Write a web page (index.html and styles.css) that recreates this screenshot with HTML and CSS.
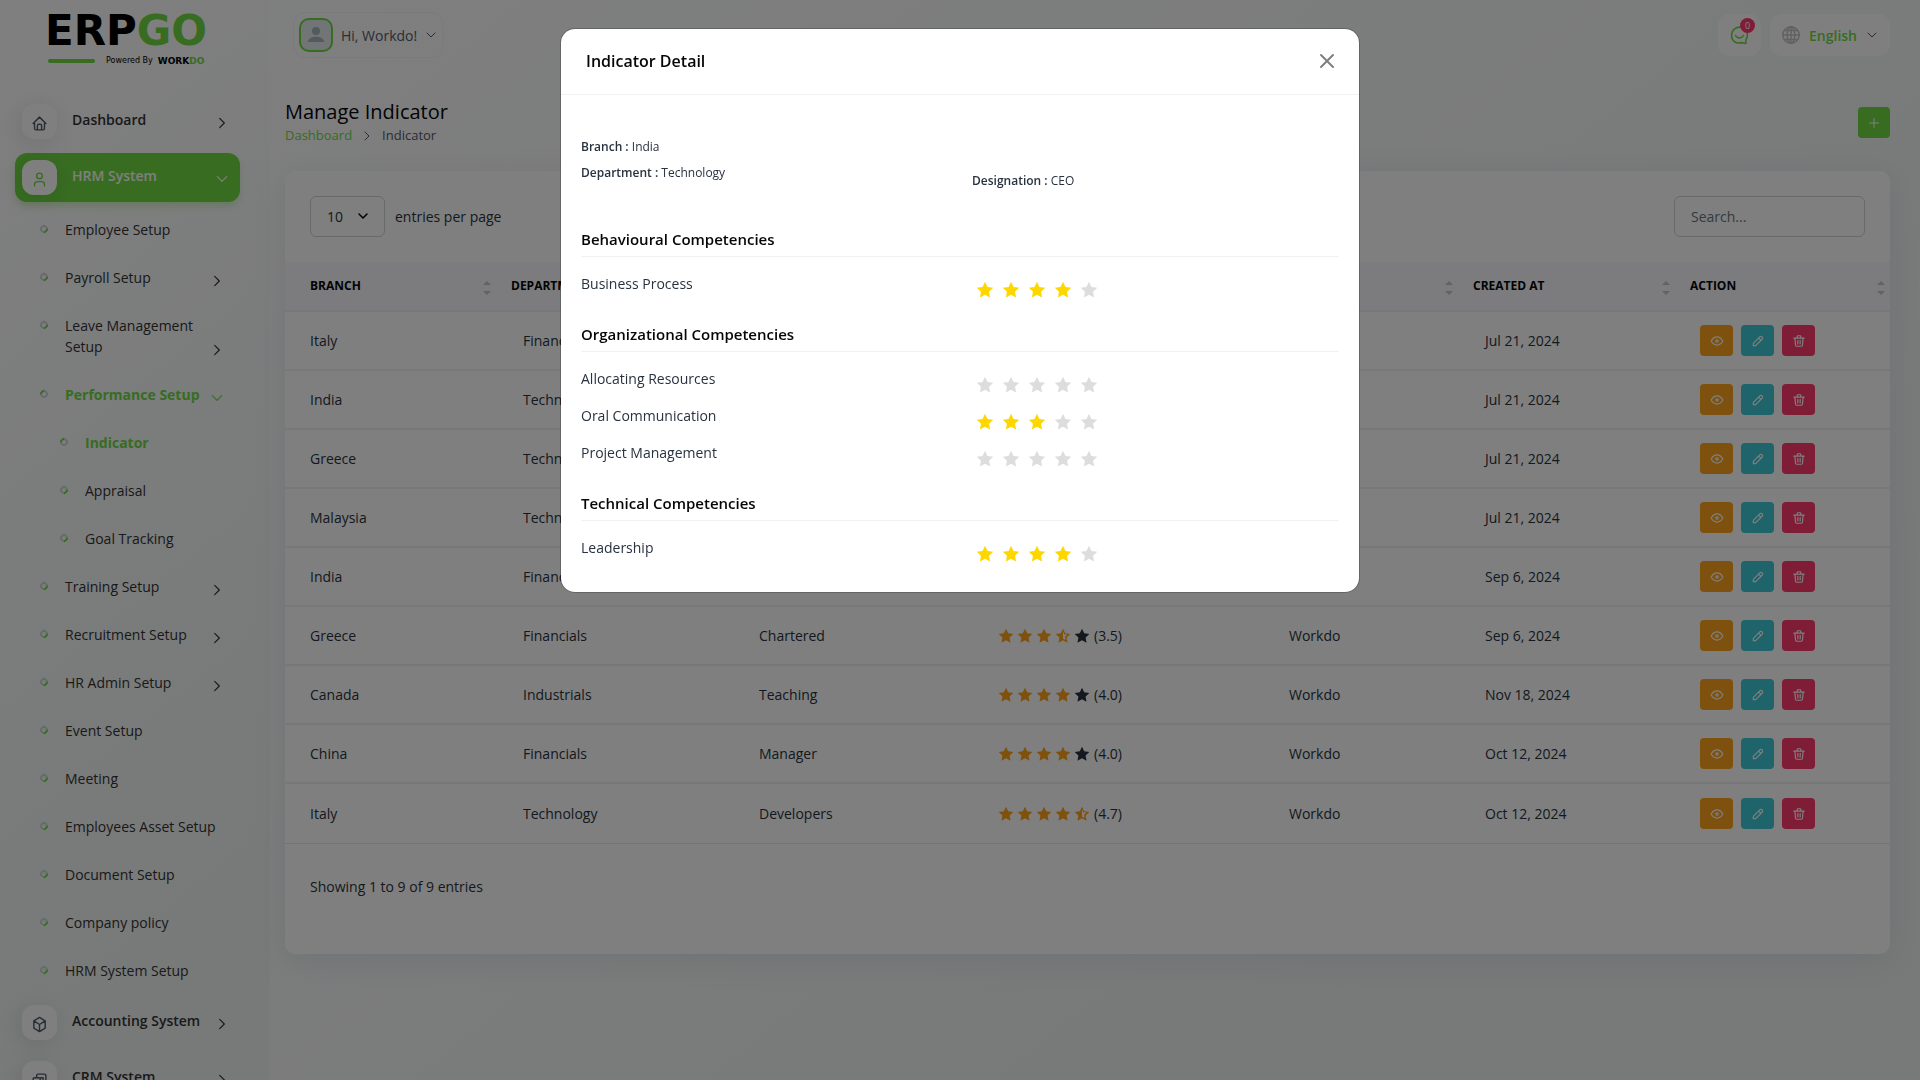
FILE: index.html
```html
<!DOCTYPE html>
<html lang="en">
<head>
    <meta charset="UTF-8">
    <meta name="viewport" content="width=device-width, initial-scale=1.0">
    <title>Manage Indicator</title>
    <link rel="stylesheet" href="styles.css">
</head>
<body>
    <!-- icon sprite -->
    <svg class="sprite" aria-hidden="true">
        <symbol id="chevron-right" viewBox="0 0 24 24"><path d="M8 4l8 8-8 8"/></symbol>
        <symbol id="chevron-down" viewBox="0 0 24 24"><path d="M4 8l8 8 8-8"/></symbol>
        <symbol id="home" viewBox="0 0 24 24"><path d="M5 12H3l9-9 9 9h-2M5 12v7a2 2 0 0 0 2 2h10a2 2 0 0 0 2-2v-7M9 21v-6a2 2 0 0 1 2-2h2a2 2 0 0 1 2 2v6"/></symbol>
        <symbol id="user" viewBox="0 0 24 24"><circle cx="12" cy="7" r="4"/><path d="M5 21v-2a4 4 0 0 1 4-4h6a4 4 0 0 1 4 4v2"/></symbol>
        <symbol id="box" viewBox="0 0 24 24"><path d="M12 2l8 5v10l-8 5-8-5V7zM12 12l8-5M12 12v10M12 12L4 7"/></symbol>
        <symbol id="layers" viewBox="0 0 24 24"><path d="M7 16v3a2 2 0 0 0 2 2h9a3 3 0 0 0 3-3V5a2 2 0 0 0-2-2h-9a2 2 0 0 0-2 2v3M3 10a2 2 0 0 1 2-2h6a2 2 0 0 1 2 2v9a2 2 0 0 1-2 2H5a2 2 0 0 1-2-2zM14 8h3v3"/></symbol>
        <symbol id="eye" viewBox="0 0 24 24"><circle cx="12" cy="12" r="2"/><path d="M22 12c-2.700 4.700-6 7-10 7s-7.300-2.300-10-7c2.700-4.700 6-7 10-7s7.300 2.300 10 7"/></symbol>
        <symbol id="pencil" viewBox="0 0 24 24"><path d="M4 20h4L19 9a2.800 2.800 0 0 0-4-4L4 16zM13 7l4 4"/></symbol>
        <symbol id="trash" viewBox="0 0 24 24"><path d="M3 7h18M10 11v6M14 11v6M5 7l1 12a2 2 0 0 0 2 2h8a2 2 0 0 0 2-2l1-12M9 7V4a1 1 0 0 1 1-1h4a1 1 0 0 1 1 1v3"/></symbol>
        <symbol id="plus" viewBox="0 0 24 24"><path d="M12 3v18M3 12h18"/></symbol>
        <symbol id="chat" viewBox="0 0 24 24"><path d="M20 17.500V22l-6-1c-6 2-12-2-12-9a10 10 0 1 1 18 5.500zM7 12c2 4 8 4 10 0"/></symbol>
        <symbol id="globe" viewBox="0 0 24 24"><circle cx="12" cy="12" r="11"/><ellipse cx="12" cy="12" rx="5" ry="11"/><path d="M12 1v22M1 12h22M3 6h18M3 18h18"/></symbol>
        <symbol id="star" viewBox="0 0 24 24"><path d="M12 1l3.300 7 7.700 1-5.600 5.300L18.800 22 12 18.300 5.200 22l1.400-7.700L1 9l7.700-1z"/></symbol>
        <symbol id="star-half" viewBox="0 0 24 24"><path fill-rule="evenodd" d="M12 1l3.300 7 7.700 1-5.600 5.300L18.800 22 12 18.300 5.200 22l1.400-7.700L1 9l7.700-1zM12 5v11l4 2-1-4.800 3.700-3.300-4.800-.6z"/></symbol>
        <symbol id="close" viewBox="0 0 16 16"><path d="M2 2l12 12M14 2L2 14"/></symbol>
        <symbol id="sort" viewBox="0 0 8 16"><path d="M0 5l4-4 4 4zM0 11l4 4 4-4z"/></symbol>
    </svg>

    <div class="app">
        <nav class="sidebar">
            <a href="#" class="logo">
                <span class="logo-name">ERP<span class="logo-green">GO</span></span>
                <span class="logo-tagline">
                    <span class="logo-bar"></span>
                    <span>Powered By</span>
                    <strong>WORK<span class="logo-green">DO</span></strong>
                </span>
            </a>

            <ul class="menu">
                <li>
                    <a href="#" class="menu-link">
                        <span class="menu-icon"><svg class="icon"><use href="#home"/></svg></span>
                        <span class="menu-text">Dashboard</span>
                        <svg class="icon arrow"><use href="#chevron-right"/></svg>
                    </a>
                </li>
                <li>
                    <a href="#" class="menu-link active">
                        <span class="menu-icon"><svg class="icon"><use href="#user"/></svg></span>
                        <span class="menu-text">HRM System</span>
                        <svg class="icon arrow"><use href="#chevron-down"/></svg>
                    </a>
                    <ul class="submenu">
                        <li><a href="#">Employee Setup</a></li>
                        <li><a href="#">Payroll Setup <svg class="icon arrow"><use href="#chevron-right"/></svg></a></li>
                        <li><a href="#"><span>Leave Management Setup</span> <svg class="icon arrow"><use href="#chevron-right"/></svg></a></li>
                        <li>
                            <a href="#" class="current">Performance Setup <svg class="icon arrow"><use href="#chevron-down"/></svg></a>
                            <ul class="submenu nested">
                                <li><a href="#" class="current">Indicator</a></li>
                                <li><a href="#">Appraisal</a></li>
                                <li><a href="#">Goal Tracking</a></li>
                            </ul>
                        </li>
                        <li><a href="#">Training Setup <svg class="icon arrow"><use href="#chevron-right"/></svg></a></li>
                        <li><a href="#">Recruitment Setup <svg class="icon arrow"><use href="#chevron-right"/></svg></a></li>
                        <li><a href="#">HR Admin Setup <svg class="icon arrow"><use href="#chevron-right"/></svg></a></li>
                        <li><a href="#">Event Setup</a></li>
                        <li><a href="#">Meeting</a></li>
                        <li><a href="#">Employees Asset Setup</a></li>
                        <li><a href="#">Document Setup</a></li>
                        <li><a href="#">Company policy</a></li>
                        <li><a href="#">HRM System Setup</a></li>
                    </ul>
                </li>
                <li>
                    <a href="#" class="menu-link">
                        <span class="menu-icon"><svg class="icon"><use href="#box"/></svg></span>
                        <span class="menu-text">Accounting System</span>
                        <svg class="icon arrow"><use href="#chevron-right"/></svg>
                    </a>
                </li>
                <li>
                    <a href="#" class="menu-link">
                        <span class="menu-icon"><svg class="icon"><use href="#layers"/></svg></span>
                        <span class="menu-text">CRM System</span>
                        <svg class="icon arrow"><use href="#chevron-right"/></svg>
                    </a>
                </li>
            </ul>
        </nav>

        <main class="content">
            <header class="topbar">
                <button type="button" class="user-button">
                    <span class="avatar"><svg viewBox="0 0 30 30"><circle cx="15" cy="11" r="4"/><path d="M7 22c0-7 16-7 16 0z"/></svg></span>
                    Hi, Workdo!
                    <svg class="icon caret"><use href="#chevron-down"/></svg>
                </button>
                <div class="topbar-right">
                    <button type="button" class="chat-button" aria-label="Messages">
                        <svg class="icon"><use href="#chat"/></svg>
                        <span class="badge">0</span>
                    </button>
                    <button type="button" class="lang-button">
                        <svg class="icon globe"><use href="#globe"/></svg>
                        English
                        <svg class="icon caret"><use href="#chevron-down"/></svg>
                    </button>
                </div>
            </header>

            <div class="page-header">
                <div>
                    <h1>Manage Indicator</h1>
                    <div class="breadcrumb">
                        <a href="#">Dashboard</a>
                        <svg class="icon"><use href="#chevron-right"/></svg>
                        <span>Indicator</span>
                    </div>
                </div>
                <button type="button" class="add-button" aria-label="Create"><svg class="icon"><use href="#plus"/></svg></button>
            </div>

            <section class="card">
                <div class="table-top">
                    <label class="per-page">
                        <span class="select-wrap">
                            <select>
                                <option>10</option>
                                <option>25</option>
                            </select>
                            <svg class="icon"><use href="#chevron-down"/></svg>
                        </span>
                        entries per page
                    </label>
                    <input type="search" class="search" placeholder="Search..." aria-label="Search">
                </div>

                <table>
                    <colgroup>
                        <col class="col-branch">
                        <col class="col-department">
                        <col class="col-designation">
                        <col class="col-rating">
                        <col class="col-added">
                        <col class="col-created">
                        <col class="col-action">
                    </colgroup>
                    <thead>
                        <tr>
                            <th>Branch<svg class="sort"><use href="#sort"/></svg></th>
                            <th>Department<svg class="sort"><use href="#sort"/></svg></th>
                            <th>Designation<svg class="sort"><use href="#sort"/></svg></th>
                            <th>Overall Rating<svg class="sort"><use href="#sort"/></svg></th>
                            <th>Added By<svg class="sort"><use href="#sort"/></svg></th>
                            <th>Created At<svg class="sort"><use href="#sort"/></svg></th>
                            <th>Action<svg class="sort"><use href="#sort"/></svg></th>
                        </tr>
                    </thead>
                    <tbody id="rows"></tbody>
                </table>

                <div class="table-bottom">Showing 1 to 9 of 9 entries</div>
            </section>
        </main>
    </div>

    <div class="backdrop">
        <div class="modal" role="dialog" aria-modal="true" aria-labelledby="modal-title">
            <div class="modal-header">
                <h2 id="modal-title">Indicator Detail</h2>
                <button type="button" class="close-button" aria-label="Close"><svg class="icon"><use href="#close"/></svg></button>
            </div>
            <div class="modal-body">
                <div class="details">
                    <div>
                        <p><strong>Branch :</strong> India</p>
                        <p><strong>Department :</strong> Technology</p>
                    </div>
                    <p class="designation"><strong>Designation :</strong> CEO</p>
                </div>

                <h3>Behavioural Competencies</h3>
                <div class="competency">Business Process <span class="stars" data-score="4"></span></div>

                <h3>Organizational Competencies</h3>
                <div class="competency">Allocating Resources <span class="stars" data-score="0"></span></div>
                <div class="competency">Oral Communication <span class="stars" data-score="3"></span></div>
                <div class="competency">Project Management <span class="stars" data-score="0"></span></div>

                <h3>Technical Competencies</h3>
                <div class="competency">Leadership <span class="stars" data-score="4"></span></div>
            </div>
        </div>
    </div>

    <script src="script.js"></script>
</body>
</html>
```
FILE: styles.css
```css
*, *::before {
    box-sizing: border-box;
}

body {
    margin: 0;
    height: 100vh;
    overflow: hidden;
    font-family: "Open Sans", sans-serif;
    font-size: 14px;
    line-height: 21px;
    color: #293240;
    background: linear-gradient(141deg, #ffffff 3%, #f0f4f3 80%);
}

h1, h2, h3, p, ul {
    margin: 0;
    padding: 0;
}

ul {
    list-style: none;
}

a {
    color: #6fd943;
    text-decoration: none;
}

button, input, select {
    font: inherit;
    color: inherit;
}

button {
    border: none;
    padding: 0;
    cursor: pointer;
}

.sprite {
    display: none;
}

.icon {
    width: 14px;
    height: 14px;
    flex-shrink: 0;
    fill: none;
    stroke: currentColor;
    stroke-width: 2;
    stroke-linecap: round;
    stroke-linejoin: round;
}

.app {
    display: flex;
    height: 100%;
}

/* Sidebar */
.sidebar {
    width: 270px;
    flex-shrink: 0;
    padding: 9px 30px 0 15px;
    background: linear-gradient(141deg, rgba(240, 244, 243, 0) 3%, #f0f4f3 100%);
}

.logo {
    display: block;
    height: 88px;
    padding-left: 30px;
    font-family: "DejaVu Sans", sans-serif;
    color: #000;
}

.logo-name {
    display: block;
    font-size: 42px;
    font-weight: bold;
    line-height: 44px;
}

.logo-green {
    color: #6fd943;
}

.logo-tagline {
    display: flex;
    align-items: center;
    gap: 5px;
    margin-left: 3px;
    font-size: 8px;
    line-height: 16px;
    white-space: nowrap;
}

.logo-tagline strong {
    font-size: 9px;
}

.logo-bar {
    width: 47px;
    height: 4px;
    margin-right: 6px;
    border-radius: 2px;
    background: #6fd943;
}

.menu {
    display: flex;
    flex-direction: column;
    gap: 7px;
}

.menu-link {
    display: flex;
    align-items: center;
    height: 49px;
    padding: 0 11px 0 7px;
    border-radius: 12px;
    font-weight: 600;
    color: #333;
}

.menu-icon {
    display: flex;
    align-items: center;
    justify-content: center;
    width: 35px;
    height: 35px;
    margin-right: 15px;
    padding-top: 3px;
    border-radius: 12px;
    background: #fff;
    box-shadow: -3px 4px 23px rgba(0, 0, 0, 0.1);
    color: #525b69;
}

.menu-icon .icon {
    width: 17px;
    height: 17px;
}

.menu-text {
    padding-bottom: 5px;
}

.arrow {
    margin-left: auto;
}

.menu-link .arrow {
    margin-top: 2px;
}

.menu-link.active {
    background: #6fd943;
    box-shadow: 0 5px 7px -1px rgba(111, 217, 67, 0.3);
    color: #fff;
}

.menu-link.active .menu-icon {
    color: #6fd943;
}

.submenu a {
    display: flex;
    align-items: flex-end;
    padding: 17px 16px 10px 50px;
    font-weight: 500;
    color: #333;
    position: relative;
}

.submenu a::before {
    content: "";
    position: absolute;
    left: 25px;
    top: 23px;
    width: 8px;
    height: 8px;
    border: 2px solid #ced4dc;
    border-right-color: #6fd943;
    border-radius: 50%;
    transform: rotate(45deg);
}

.submenu a.current {
    font-weight: 700;
    color: #6fd943;
}

.submenu a.current::before {
    border-color: #ced4dc;
    border-left-color: #6fd943;
}

.submenu .nested a {
    padding-left: 70px;
}

.submenu .nested a::before {
    left: 45px;
}

/* Main content */
.content {
    flex: 1;
    min-width: 0;
    padding: 12px 30px 0 15px;
}

.topbar {
    display: flex;
    align-items: center;
    justify-content: space-between;
    height: 46px;
    padding-left: 8px;
}

.user-button {
    display: flex;
    align-items: center;
    gap: 8px;
    height: 46px;
    padding: 0 6px 0 5px;
    border: 1px solid #f4f5f5;
    border-radius: 12px;
    background: transparent;
    font-weight: 500;
    color: #525b69;
}

.avatar {
    width: 34px;
    height: 34px;
    border: 2px solid #6fd943;
    border-radius: 10px;
    background: #e2eaec;
    overflow: hidden;
}

.avatar svg {
    display: block;
    fill: #a5b4bd;
}

.topbar-right {
    display: flex;
    gap: 9px;
}

.chat-button, .lang-button {
    display: flex;
    align-items: center;
    justify-content: center;
    height: 42px;
    border-radius: 12px;
    background: #fff;
    color: #6fd943;
}

.chat-button {
    width: 43px;
    position: relative;
}

.chat-button .icon {
    width: 19px;
    height: 19px;
}

.badge {
    position: absolute;
    top: 4px;
    right: 6px;
    width: 15px;
    height: 15px;
    border-radius: 50%;
    background: #ff3a6e;
    font-size: 9px;
    line-height: 15px;
    color: #fff;
}

.lang-button {
    gap: 9px;
    padding: 0 12px;
    font-weight: 600;
}

.lang-button .globe {
    width: 18px;
    height: 18px;
    color: #bfc3c7;
}

.caret {
    width: 12px;
    height: 12px;
    color: #525b69;
}

.page-header {
    display: flex;
    align-items: center;
    justify-content: space-between;
    height: 113px;
    padding-top: 24px;
    padding-bottom: 8px;
}

h1 {
    font-size: 20px;
    font-weight: 500;
    line-height: 26px;
    color: #060606;
}

.breadcrumb {
    display: flex;
    align-items: center;
    gap: 9px;
    font-size: 13px;
    color: #525b69;
}

.breadcrumb .icon {
    width: 12px;
    height: 12px;
}

.add-button {
    display: flex;
    align-items: center;
    justify-content: center;
    width: 32px;
    height: 31px;
    border-radius: 4px;
    background: #6fd943;
    color: #fff;
}

.add-button .icon {
    width: 12px;
    height: 12px;
}

.card {
    border-radius: 10px;
    background: #fff;
    box-shadow: 0 6px 30px rgba(182, 186, 203, 0.3);
}

.table-top {
    display: flex;
    align-items: center;
    justify-content: space-between;
    padding: 25px;
}

.per-page {
    display: flex;
    align-items: center;
    gap: 10px;
}

.select-wrap {
    display: block;
    position: relative;
}

.select-wrap select, .search {
    height: 41px;
    border: 1px solid #ced4da;
    border-radius: 6px;
    background: #fff;
    padding: 0 16px;
}

.select-wrap select {
    width: 75px;
    appearance: none;
}

.select-wrap .icon {
    position: absolute;
    top: 14px;
    right: 16px;
    width: 12px;
    height: 12px;
    stroke-width: 3;
    color: #000;
    pointer-events: none;
}

.search {
    width: 191px;
}

.search::placeholder {
    color: #6c757d;
}

table {
    width: 100%;
    table-layout: fixed;
    border-collapse: separate;
    border-spacing: 0;
}

.col-branch { width: 211px; }
.col-department { width: 236px; }
.col-designation { width: 239px; }
.col-rating { width: 291px; }
.col-added { width: 196px; }
.col-created { width: 217px; }
.col-action { width: 215px; }

th {
    position: relative;
    height: 50px;
    padding: 0 15px 2px;
    border-bottom: 2px solid #f1f1f1;
    background: #f8f9fd;
    font-size: 12px;
    font-weight: 700;
    text-align: left;
    text-transform: uppercase;
    color: #060606;
}

th:first-child, td:first-child {
    padding-left: 25px;
}

.sort {
    position: absolute;
    right: 5px;
    top: 18px;
    width: 8px;
    height: 16px;
    fill: #c5c5c9;
}

td {
    height: 59px;
    padding: 0 27px;
    border-bottom: 2px solid #f1f1f1;
}

td:last-child {
    padding-left: 25px;
}

tr:last-child td {
    height: 60px;
    border-bottom: 1px solid #e6eaee;
}

.rating, .actions {
    display: flex;
    align-items: center;
}

.rating {
    gap: 3px;
}

.rating svg {
    width: 16px;
    height: 16px;
    fill: #ffa21d;
}

.rating .empty {
    fill: #293240;
}

.rating span {
    margin-left: 1px;
}

.actions {
    gap: 8px;
}

.actions button {
    display: flex;
    align-items: center;
    justify-content: center;
    width: 33px;
    height: 31px;
    border-radius: 4px;
    color: #fff;
}

.actions .view { background: #ffa21d; }
.actions .edit { background: #3ec9d6; }
.actions .delete { background: #ff3a6e; }

.table-bottom {
    padding: 32px 25px 57px;
}

/* Modal */
.backdrop {
    position: fixed;
    inset: 0;
    display: flex;
    align-items: flex-start;
    justify-content: center;
    padding-top: 28px;
    background: rgba(0, 0, 0, 0.5);
}

.modal {
    width: 800px;
    max-width: 95%;
    border: 1px solid rgba(0, 0, 0, 0.2);
    border-radius: 15px;
    background: #fff;
    background-clip: padding-box;
}

.modal-header {
    display: flex;
    align-items: center;
    justify-content: space-between;
    height: 66px;
    padding: 0 24px 1px 25px;
    border-bottom: 1px solid #f1f1f1;
}

.modal-header h2 {
    font-size: 16px;
    font-weight: 600;
    color: #060606;
}

.close-button {
    display: flex;
    background: transparent;
    color: #7f7f7f;
}

.close-button .icon {
    width: 16px;
    height: 16px;
}

.modal-body {
    padding: 41px 20px 18px;
}

.details {
    display: grid;
    grid-template-columns: 391px 1fr;
    height: 79px;
    font-size: 12px;
}

.details p {
    margin-bottom: 5px;
}

.details strong {
    font-weight: 600;
}

.details .designation {
    padding-top: 34px;
}

h3 {
    margin-top: 15px;
    margin-bottom: 16px;
    padding-bottom: 8px;
    border-bottom: 1px solid #f1f1f1;
    font-size: 15px;
    font-weight: 600;
    line-height: 18px;
    color: #060606;
}

.competency {
    display: grid;
    grid-template-columns: 395px 1fr;
    height: 37px;
}

.stars {
    display: flex;
    gap: 8px;
    padding-top: 8px;
}

.stars svg {
    width: 18px;
    height: 18px;
    fill: #ddd;
}

.stars .on {
    fill: #ffd700;
}
```
FILE: script.js
```js
const indicators = [
    ['Italy', 'Financials', 'Chartered', 4.5, 'Jul 21, 2024'],
    ['India', 'Technology', 'CEO', 2.2, 'Jul 21, 2024'],
    ['Greece', 'Technology', 'Developers', 3.5, 'Jul 21, 2024'],
    ['Malaysia', 'Technology', 'Manager', 4.0, 'Jul 21, 2024'],
    ['India', 'Financials', 'Chartered', 4.0, 'Sep 6, 2024'],
    ['Greece', 'Financials', 'Chartered', 3.5, 'Sep 6, 2024'],
    ['Canada', 'Industrials', 'Teaching', 4.0, 'Nov 18, 2024'],
    ['China', 'Financials', 'Manager', 4.0, 'Oct 12, 2024'],
    ['Italy', 'Technology', 'Developers', 4.7, 'Oct 12, 2024']
];

function ratingStars(score) {
    let html = '';
    for (let i = 1; i <= 5; i++) {
        if (score >= i) {
            html += '<svg><use href="#star"/></svg>';
        } else if (score > i - 1) {
            html += '<svg><use href="#star-half"/></svg>';
        } else {
            html += '<svg class="empty"><use href="#star"/></svg>';
        }
    }
    return html;
}

document.getElementById('rows').innerHTML = indicators.map(([branch, department, designation, score, date]) => `
    <tr>
        <td>${branch}</td>
        <td>${department}</td>
        <td>${designation}</td>
        <td><div class="rating">${ratingStars(score)}<span>(${score.toFixed(1)})</span></div></td>
        <td>Workdo</td>
        <td>${date}</td>
        <td><div class="actions">
            <button type="button" class="view" aria-label="View"><svg class="icon"><use href="#eye"/></svg></button>
            <button type="button" class="edit" aria-label="Edit"><svg class="icon"><use href="#pencil"/></svg></button>
            <button type="button" class="delete" aria-label="Delete"><svg class="icon"><use href="#trash"/></svg></button>
        </div></td>
    </tr>`).join('');

document.querySelectorAll('.stars').forEach(el => {
    const score = Number(el.dataset.score);
    for (let i = 1; i <= 5; i++) {
        el.innerHTML += `<svg class="${i <= score ? 'on' : ''}"><use href="#star"/></svg>`;
    }
});
```
